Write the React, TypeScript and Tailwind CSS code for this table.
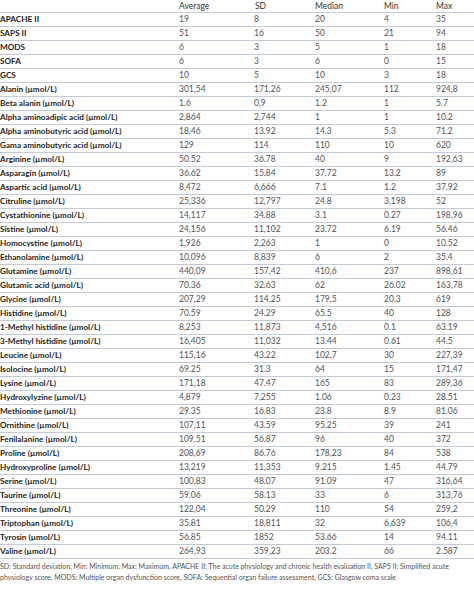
const rows: [string, string, string, string, string, string][] = [
  ["APACHE II", "19", "8", "20", "4", "35"],
  ["SAPS II", "51", "16", "50", "21", "94"],
  ["MODS", "6", "3", "5", "1", "18"],
  ["SOFA", "6", "3", "6", "0", "15"],
  ["GCS", "10", "5", "10", "3", "18"],
  ["Alanin (µmol/L)", "301,54", "171,26", "245,07", "112", "924,8"],
  ["Beta alanin (µmol/L)", "1.6", "0,9", "1.2", "1", "5.7"],
  ["Alpha aminoadipic acid (µmol/L)", "2,864", "2,744", "1", "1", "10.2"],
  ["Alpha aminobutyric acid (µmol/L)", "18.46", "13.92", "14.3", "5.3", "71.2"],
  ["Gama aminobutyric acid (µmol/L)", "129", "114", "110", "10", "620"],
  ["Arginine (µmol/L)", "50.52", "36.78", "40", "9", "192,63"],
  ["Asparagin (µmol/L)", "36.62", "15.84", "37.72", "13.2", "89"],
  ["Aspartic acid (µmol/L)", "8,472", "6,666", "7.1", "1.2", "37.92"],
  ["Citruline (µmol/L)", "25,336", "12,797", "24.8", "3,198", "52"],
  ["Cystathionine (µmol/L)", "14,117", "34.88", "3.1", "0.27", "198,96"],
  ["Sistine (µmol/L)", "24,156", "11,102", "23.72", "6.19", "56.46"],
  ["Homocystine (µmol/L)", "1,926", "2,263", "1", "0", "10.52"],
  ["Ethanolamine (µmol/L)", "10,096", "8,839", "6", "2", "35.4"],
  ["Glutamine (µmol/L)", "440,09", "157,42", "410,6", "237", "898,61"],
  ["Glutamic acid (µmol/L)", "70.36", "32.63", "62", "26.02", "163,78"],
  ["Glycine (µmol/L)", "207,29", "114,25", "179,5", "20.3", "619"],
  ["Histidine (µmol/L)", "70.59", "24.29", "65.5", "40", "128"],
  ["1-Methyl histidine (µmol/L)", "8,253", "11,873", "4,516", "0.1", "63.19"],
  ["3-Methyl histidine (µmol/L)", "16,405", "11,032", "13.44", "0.61", "44.5"],
  ["Leucine (µmol/L)", "115,16", "43.22", "102,7", "30", "227,39"],
  ["Isolocine (µmol/L)", "69.25", "31.3", "64", "15", "171,47"],
  ["Lysine (µmol/L)", "171,18", "47.47", "165", "83", "289,36"],
  ["Hydroxylyzine (µmol/L)", "4,879", "7,255", "1.06", "0.23", "28.51"],
  ["Methionine (µmol/L)", "29.35", "16.83", "23.8", "8.9", "81.06"],
  ["Ornithine (µmol/L)", "107,11", "43.59", "95.25", "39", "241"],
  ["Fenilalanine (µmol/L)", "109,51", "56.87", "96", "40", "372"],
  ["Proline (µmol/L)", "208,69", "86.76", "178,23", "84", "538"],
  ["Hydroxyproline (µmol/L)", "13,219", "11,353", "9.215", "1.45", "44.79"],
  ["Serine (µmol/L)", "100,83", "48.07", "91.09", "47", "316,64"],
  ["Taurine (µmol/L)", "59.06", "58.13", "33", "6", "313,76"],
  ["Threonine (µmol/L)", "122,04", "50.29", "110", "54", "259,2"],
  ["Triptophan (µmol/L)", "35.81", "18,811", "32", "6,639", "106,4"],
  ["Tyrosin (µmol/L)", "56.85", "1852", "53.66", "14", "94.11"],
  ["Valine (µmol/L)", "264,93", "359,23", "203.2", "66", "2.587"],
];

const grid = "grid grid-cols-[179px_75px_61px_69px_52px_38px]";

export default function App() {
  return (
    <div className="w-[474px] h-[604px] overflow-hidden bg-white font-['Lato','Liberation_Sans',sans-serif] text-[8.5px] leading-none">
      <div className={`${grid} h-[13px] items-center border-b-[1.5px] border-[#c3cad8] text-[#333]`}>
        <div />
        <div>Average</div>
        <div className="pl-[1px]">SD</div>
        <div>Median</div>
        <div>Min</div>
        <div>Max</div>
      </div>
      {rows.map((r) => (
        <div
          key={r[0]}
          className={`${grid} h-[14px] items-center border-b-[1.5px] border-[#c3cad8] text-[#555]`}
        >
          <div className="font-bold text-[8.2px] text-[#1e1e1e] whitespace-nowrap">{r[0]}</div>
          <div>{r[1]}</div>
          <div>{r[2]}</div>
          <div>{r[3]}</div>
          <div>{r[4]}</div>
          <div className="whitespace-nowrap">{r[5]}</div>
        </div>
      ))}
      <div className="mt-[2px] w-[474px] text-[7px] leading-[11px] text-[#555]">
        <p>
          SD: Standard deviation, Min: Minimum, Max: Maximum, APACHE II: The acute physiology and chronic health evaluation II, SAPS II: Simplified acute physiology
          score, MODS: Multiple organ dysfunction score, SOFA: Sequential organ failure assessment, GCS: Glasgow coma scale
        </p>
      </div>
    </div>
  );
}
